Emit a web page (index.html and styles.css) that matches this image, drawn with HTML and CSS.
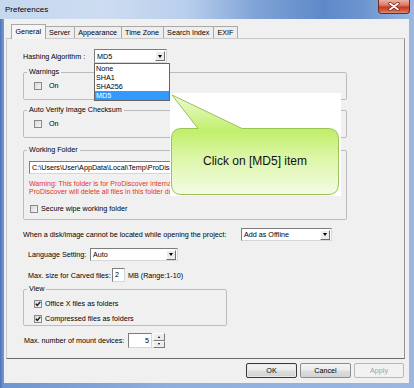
FILE: index.html
```html
<!DOCTYPE html>
<html>
<head>
<meta charset="utf-8">
<link rel="stylesheet" href="styles.css">
</head>
<body>
<div class="window">
  <div class="titlebar">
    <span class="title">Preferences</span>
    <span class="close"><svg width="12" height="9" viewBox="0 0 12 9"><path d="M2 1.5 L10 7.5 M10 1.5 L2 7.5" stroke="#6b1d12" stroke-width="3.2" stroke-linecap="round"/><path d="M2 1.5 L10 7.5 M10 1.5 L2 7.5" stroke="#fff" stroke-width="1.8" stroke-linecap="round"/></svg></span>
  </div>
  <div class="client">
    <div class="tabs">
      <div class="tab sel">General</div>
      <div class="tab">Server</div>
      <div class="tab">Appearance</div>
      <div class="tab">Time Zone</div>
      <div class="tab">Search Index</div>
      <div class="tab">EXIF</div>
    </div>
    <div class="panel">
      <div class="row r-hash">
        <span class="lbl w-hash">Hashing Algorithm :</span>
        <div class="combo c-hash">
          <span class="val">MD5</span><span class="arrow"></span>
          <div class="list">
            <div class="item">None</div>
            <div class="item">SHA1</div>
            <div class="item">SHA256</div>
            <div class="item hi">MD5</div>
          </div>
        </div>
      </div>
      <fieldset class="grp g-small g-warn">
        <legend>Warnings</legend>
        <div class="chkrow ml10"><span class="box"></span><span class="gap8">On</span></div>
      </fieldset>
      <fieldset class="grp g-small g-verify">
        <legend>Auto Verify Image Checksum</legend>
        <div class="chkrow ml10"><span class="box"></span><span class="gap8">On</span></div>
      </fieldset>
      <fieldset class="grp g-folder">
        <legend>Working Folder</legend>
        <div class="textbox tb-folder">C:\Users\User\AppData\Local\Temp\ProDiscover\</div>
        <div class="warn">Warning: This folder is for ProDiscover internal use only.<br>ProDiscover will delete all files in this folder during shutdown.</div>
        <div class="chkrow ml6 mt9"><span class="box"></span><span class="gap3">Secure wipe working folder</span></div>
      </fieldset>
      <div class="row r-when">
        <span class="lbl w-when">When a disk/image cannot be located while opening the project:</span>
        <div class="combo c-when"><span class="val">Add as Offline</span><span class="arrow"></span></div>
      </div>
      <div class="row r-lang">
        <span class="lbl w-lang">Language Setting:</span>
        <div class="combo c-lang"><span class="val">Auto</span><span class="arrow"></span></div>
      </div>
      <div class="row r-size">
        <span class="lbl w-size">Max. size for Carved files:</span>
        <div class="textbox tb-size">2</div>
        <span class="mb">MB (Range:1-10)</span>
      </div>
      <fieldset class="grp g-view">
        <legend>View</legend>
        <div class="chkrow ml10"><span class="box on"><svg width="6" height="6" viewBox="0 0 6 6"><path d="M0.8 2.8 L2.3 4.5 L5.3 0.9" fill="none" stroke="#1a1a1a" stroke-width="1.4"/></svg></span><span class="gap3">Office X files as folders</span></div>
        <div class="chkrow ml10 mt6"><span class="box on"><svg width="6" height="6" viewBox="0 0 6 6"><path d="M0.8 2.8 L2.3 4.5 L5.3 0.9" fill="none" stroke="#1a1a1a" stroke-width="1.4"/></svg></span><span class="gap3">Compressed files as folders</span></div>
      </fieldset>
      <div class="row r-mount">
        <span class="lbl w-mount">Max. number of mount devices:</span>
        <div class="textbox tb-spin">5</div>
        <div class="spinbtns"><span class="sb up"></span><span class="sb down"></span></div>
      </div>
    </div>
    <div class="buttons">
      <div class="btn ok">OK</div>
      <div class="btn cancel">Cancel</div>
      <div class="btn apply">Apply</div>
    </div>
  </div>
  <svg class="callout" width="172" height="104" viewBox="0 0 172 104">
    <defs>
      <linearGradient id="cg" x1="0" y1="0" x2="0" y2="1">
        <stop offset="0" stop-color="#eef9d8"/>
        <stop offset="0.36" stop-color="#c2ef6b"/>
        <stop offset="0.62" stop-color="#dcf6a6"/>
        <stop offset="1" stop-color="#f4fbe6"/>
      </linearGradient>
    </defs>
    <rect x="0" y="0" width="171" height="103" fill="#fff"/>
    <path d="M11 35.5 L28 35.5 L2 2 L72 35.5 L158 35.5 Q168.5 35.5 168.5 46 L168.5 91 Q168.5 101.5 158 101.5 L11 101.5 Q1.5 101.5 1.5 91 L1.5 46 Q1.5 35.5 11 35.5 Z" fill="url(#cg)" stroke="#9cc25a" stroke-width="1"/>
    <text x="85" y="71.5" text-anchor="middle" class="ctext">Click on [MD5] item</text>
  </svg>
</div>
</body>
</html>
```
FILE: styles.css
```css
html, body { margin: 0; padding: 0; }
body {
  font-family: "Liberation Sans", Arial, sans-serif;
  font-size: 7.2px;
  color: #000;
  background: #fff;
}
.window {
  position: relative;
  width: 414px;
  height: 388px;
  display: flex;
  flex-direction: column;
  overflow: hidden;
  background: linear-gradient(to right, #4a73b4 0, #6f96cf 3px, #8eaedd 40%, #9ab7e1 100%);
}
.titlebar {
  flex: none;
  height: 19px;
  display: flex;
  align-items: flex-start;
  padding: 0 4px 0 5px;
  background: linear-gradient(to right, #c6d7ee 0%, #cddcf1 25%, #b9cfec 45%, #7fa3d6 62%, #5e89c9 78%, #6d95cf 88%, #9bb8e2 100%);
}
.title {
  margin-top: 5px;
  font-size: 8px;
  line-height: 10px;
  color: #000;
}
.close {
  margin-left: auto;
  width: 32px;
  height: 14px;
  box-sizing: border-box;
  border: 1px solid #6f2a1e;
  border-top: none;
  border-radius: 0 0 4px 4px;
  background: linear-gradient(#eab0a2 0%, #da7964 40%, #c63b20 55%, #cf5a3f 80%, #e08f75 100%);
  display: flex;
  align-items: center;
  justify-content: center;
}
.client {
  flex: 1;
  margin: 0 5px 5px 4px;
  background: #f0f0f0;
  display: flex;
  flex-direction: column;
}
.tabs {
  flex: none;
  height: 19px;
  display: flex;
  align-items: flex-end;
  padding-left: 7px;
}
.tab {
  height: 12px;
  line-height: 12px;
  padding: 0 3.5px;
  box-sizing: border-box;
  border: 1px solid #a9a9a9;
  border-left: none;
  border-bottom: none;
  background: #eeeeee;
  white-space: nowrap;
}
.tab.sel {
  position: relative;
  z-index: 1;
  height: 15px;
  line-height: 14px;
  margin-bottom: -1px;
  border-left: 1px solid #a9a9a9;
  background: #f5f5f5;
  padding: 0 3.5px;
}
.panel {
  flex: none;
  margin-left: 2px;
  width: 399px;
  height: 321px;
  box-sizing: border-box;
  border: 1px solid;
  border-color: #c9c9c9 #939393 #6a6a6a #c9c9c9;
  background: #f0f0f0;
}
.row {
  display: flex;
  align-items: center;
  padding-left: 16px;
  white-space: nowrap;
}
.lbl { flex: none; }
.r-hash { margin-top: 10px; height: 14px; }
.w-hash { width: 71px; }
.combo {
  position: relative;
  flex: none;
  display: flex;
  align-items: center;
  height: 100%;
  box-sizing: border-box;
  border: 1px solid;
  border-color: #7c7c7c #d6d6d6 #d6d6d6 #7c7c7c;
  background: #fff;
  padding-left: 2px;
}
.c-hash { width: 73px; }
.arrow {
  margin-left: auto;
  margin-right: 1px;
  width: 10px;
  height: 10px;
  box-sizing: border-box;
  border: 1px solid;
  border-color: #fff #6e6e6e #6e6e6e #fff;
  background: #ececec;
  display: flex;
  align-items: center;
  justify-content: center;
}
.arrow::after {
  content: "";
  border-left: 2.5px solid transparent;
  border-right: 2.5px solid transparent;
  border-top: 3px solid #000;
}
.list {
  position: absolute;
  z-index: 2;
  left: -1px;
  top: 13px;
  width: 76px;
  box-sizing: border-box;
  border: 1px solid #646464;
  background: #fff;
}
.item {
  height: 9px;
  line-height: 9px;
  padding-left: 1px;
}
.item.hi { background: #3399ff; color: #fff; }

.grp {
  margin: 0 0 0 16px;
  padding: 5px 0 9px 0;
  border: 1px solid #bcbcbc;
  border-radius: 2px;
  box-sizing: border-box;
  min-width: 0;
}
.grp legend {
  padding: 0 2px;
  margin-left: 3px;
  line-height: 8px;
  font-size: 7.2px;
}
.g-small { width: 324px; }
.g-warn { margin-top: 5px; }
.g-verify { margin-top: 6px; }
.g-folder { width: 324px; margin-top: 8px; padding: 7px 0 6px 0; }
.g-view { width: 204px; margin-top: 3px; padding: 6px 0 2px 0; }
.chkrow {
  display: flex;
  align-items: center;
  height: 9px;
  white-space: nowrap;
}
.ml10 { margin-left: 10px; }
.ml6 { margin-left: 6px; }
.mt9 { margin-top: 9px; }
.mt6 { margin-top: 6px; }
.box {
  flex: none;
  width: 8px;
  height: 8px;
  box-sizing: border-box;
  border: 1px solid #8a8a8a;
  background: linear-gradient(135deg, #d8d8d8, #f7f7f7);
  display: flex;
  align-items: center;
  justify-content: center;
}
.gap8 { margin-left: 7px; }
.gap3 { margin-left: 3px; }
.textbox {
  flex: none;
  box-sizing: border-box;
  border: 1px solid;
  border-color: #7c7c7c #d6d6d6 #d6d6d6 #7c7c7c;
  background: #fff;
  white-space: nowrap;
  overflow: hidden;
}
.tb-folder {
  margin-left: 5px;
  width: 311px;
  height: 13px;
  line-height: 11px;
  padding-left: 2px;
}
.warn {
  margin: 6px 0 0 5px;
  color: #e8302a;
  font-size: 7px;
  line-height: 7.5px;
  white-space: nowrap;
}
.r-when { margin-top: 8px; height: 13px; }
.w-when { width: 218px; }
.c-when { width: 91px; }
.r-lang { margin-top: 7px; height: 13px; padding-left: 21px; }
.w-lang { width: 62px; }
.c-lang { width: 88px; }
.r-size { margin-top: 7px; height: 14px; padding-left: 21px; }
.w-size { width: 84px; }
.tb-size {
  width: 13px;
  height: 14px;
  line-height: 12px;
  padding-left: 2px;
}
.mb { margin-left: 3px; }
.r-mount { margin-top: 7px; height: 15px; padding-left: 17px; }
.w-mount { width: 104px; }
.tb-spin {
  width: 24px;
  height: 15px;
  line-height: 13px;
  text-align: right;
  padding-right: 2px;
}
.spinbtns {
  flex: none;
  margin-left: 1px;
  width: 12px;
  height: 15px;
  display: flex;
  flex-direction: column;
}
.sb {
  flex: 1;
  box-sizing: border-box;
  border: 1px solid;
  border-color: #fff #7a7a7a #7a7a7a #fff;
  background: #ececec;
  display: flex;
  align-items: center;
  justify-content: center;
}
.sb.up::after {
  content: "";
  border-left: 1.5px solid transparent;
  border-right: 1.5px solid transparent;
  border-bottom: 2px solid #000;
}
.sb.down::after {
  content: "";
  border-left: 1.5px solid transparent;
  border-right: 1.5px solid transparent;
  border-top: 2px solid #000;
}
.buttons {
  flex: none;
  display: flex;
  justify-content: flex-end;
  gap: 3px;
  margin-top: 4px;
  padding-right: 5px;
}
.btn {
  width: 51px;
  height: 15px;
  box-sizing: border-box;
  border: 1px solid #8d8d8d;
  border-radius: 2px;
  background: linear-gradient(#f4f4f4 0%, #ececec 48%, #dedede 52%, #d2d2d2 100%);
  text-align: center;
  line-height: 13px;
}
.btn.ok { border-color: #3a3a3a; box-shadow: inset 0 0 0 1px #e8e8e8; }
.btn.apply { width: 50px; color: #a3a3a3; border-color: #b9b9b9; background: #f2f2f2; }
.callout {
  position: absolute;
  left: 170px;
  top: 93px;
  z-index: 3;
}
.ctext {
  font-family: "Liberation Sans", Arial, sans-serif;
  font-size: 12px;
  fill: #111;
}
```
